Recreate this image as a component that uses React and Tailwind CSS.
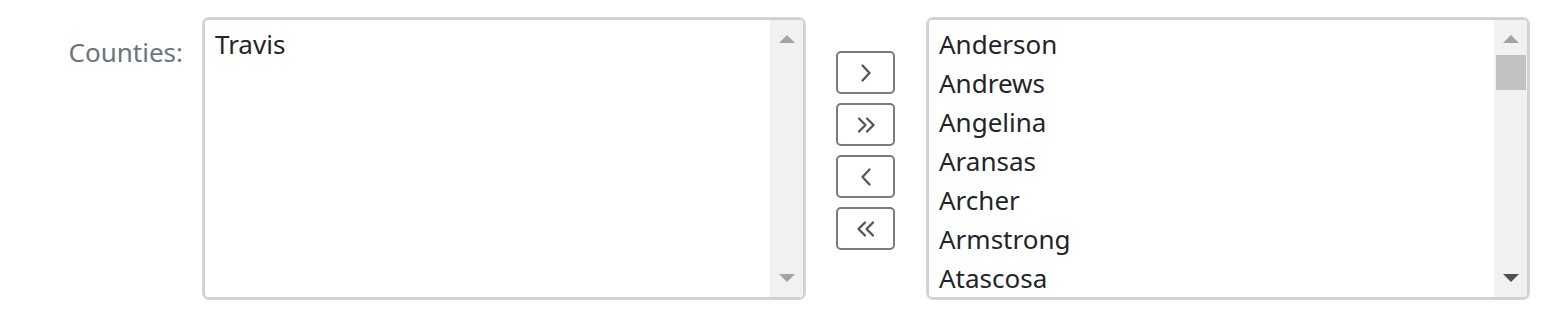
const available = ['Anderson', 'Andrews', 'Angelina', 'Aransas', 'Archer', 'Armstrong', 'Atascosa']
const selected = ['Travis']

function ScrollBar({ thumb }) {
  return (
    <div className="relative w-[33px] shrink-0 bg-[#f1f1f1]">
      <div className="absolute left-1/2 top-[15px] -translate-x-1/2 w-0 h-0 border-l-[8px] border-r-[8px] border-b-[8px] border-l-transparent border-r-transparent border-b-[#a3a3a3]" />
      {thumb && <div className="absolute left-[2px] right-[1px] top-[35px] h-[35px] bg-[#c1c1c1]" />}
      <div
        className={`absolute left-1/2 bottom-[15px] -translate-x-1/2 w-0 h-0 border-l-[8px] border-r-[8px] border-t-[8px] border-l-transparent border-r-transparent ${
          thumb ? 'border-t-[#505050]' : 'border-t-[#a3a3a3]'
        }`}
      />
    </div>
  )
}

function ListBox({ items, thumb }) {
  return (
    <div className="w-[604px] h-[283px] rounded-[7px] border border-[#d6d6d6]">
      <div className="flex h-full rounded-[5px] border-2 border-[#cfd2d5] overflow-hidden bg-white">
        <ul className="flex-1 overflow-hidden pt-[5px] pl-[10px] text-[26px] leading-[39px] text-[#212529]">
          {items.map((name) => (
            <li key={name}>{name}</li>
          ))}
        </ul>
        <ScrollBar thumb={thumb} />
      </div>
    </div>
  )
}

function MoveButton({ children }) {
  return (
    <button className="w-[59px] h-[43px] flex items-center justify-center rounded-[5px] border-2 border-[#7b7b7b] bg-white text-[#555]">
      {children}
    </button>
  )
}

function Chevron({ left }) {
  return (
    <svg width="14" height="20" viewBox="0 0 14 20" fill="none" stroke="currentColor" strokeWidth="2.3" strokeLinecap="round" strokeLinejoin="round">
      <path d={left ? 'M10.5 2.5 L3.5 10 L10.5 17.5' : 'M3.5 2.5 L10.5 10 L3.5 17.5'} />
    </svg>
  )
}

function DoubleChevron({ left }) {
  return (
    <svg width="22" height="18" viewBox="0 0 22 18" fill="none" stroke="currentColor" strokeWidth="2.3" strokeLinecap="round" strokeLinejoin="round">
      <path
        d={
          left
            ? 'M10 2.5 L3.5 9 L10 15.5 M18 2.5 L11.5 9 L18 15.5'
            : 'M4 2.5 L10.5 9 L4 15.5 M12 2.5 L18.5 9 L12 15.5'
        }
      />
    </svg>
  )
}

export default function App() {
  return (
    <div className="min-h-screen bg-white pt-[17px] font-['Noto_Sans',sans-serif]">
      <div className="flex items-start">
        <label className="w-[183px] text-right text-[26px] leading-[39px] mt-[16px] text-[#6c757d]">Counties:</label>
        <div className="ml-[19px]">
          <ListBox items={selected} />
        </div>
        <div className="ml-[30px] mt-[34px] flex flex-col gap-[9px]">
          <MoveButton>
            <Chevron />
          </MoveButton>
          <MoveButton>
            <DoubleChevron />
          </MoveButton>
          <MoveButton>
            <Chevron left />
          </MoveButton>
          <MoveButton>
            <DoubleChevron left />
          </MoveButton>
        </div>
        <div className="ml-[31px]">
          <ListBox items={available} thumb />
        </div>
      </div>
    </div>
  )
}
